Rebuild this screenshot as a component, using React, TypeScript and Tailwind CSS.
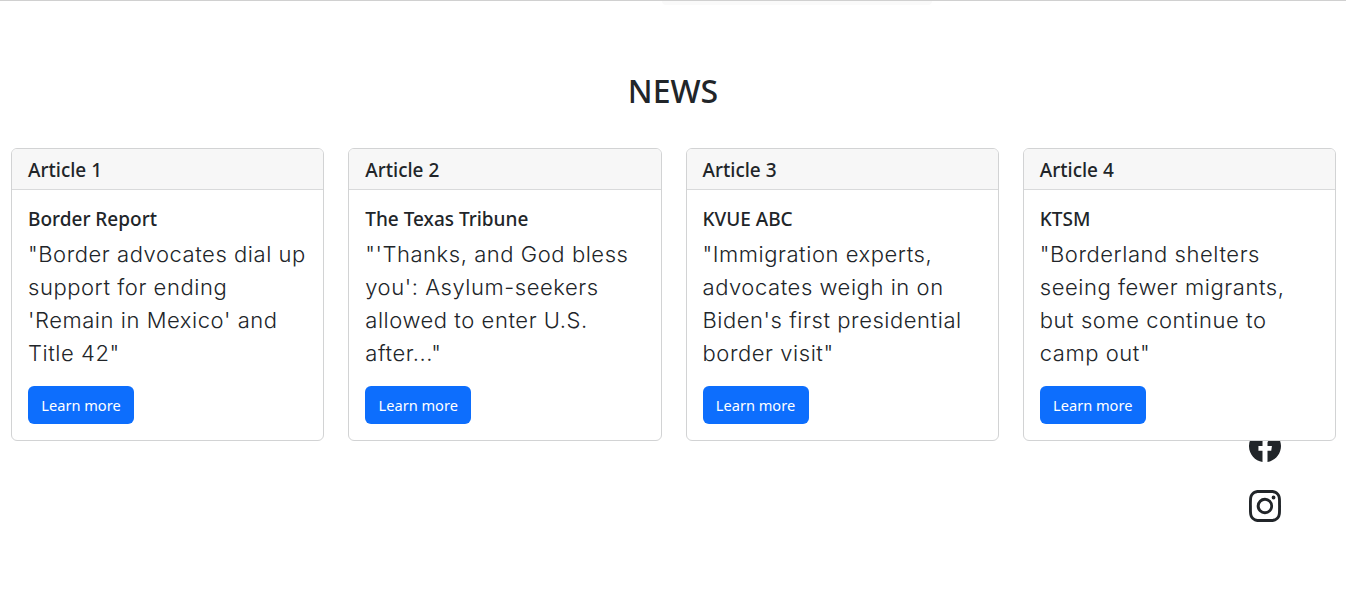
import { BsFacebook, BsInstagram } from "react-icons/bs";

const ARTICLES = [
  { title: "Article 1", source: "Border Report", text: "\"Border advocates dial up support for ending 'Remain in Mexico' and Title 42\"" },
  { title: "Article 2", source: "The Texas Tribune", text: "\"'Thanks, and God bless you': Asylum-seekers allowed to enter U.S. after...\"" },
  { title: "Article 3", source: "KVUE ABC", text: "\"Immigration experts, advocates weigh in on Biden's first presidential border visit\"" },
  { title: "Article 4", source: "KTSM", text: "\"Borderland shelters seeing fewer migrants, but some continue to camp out\"" },
];

export default function App() {
  return (
    <div className="relative h-[600px] overflow-hidden bg-white text-[#212529] font-['Noto_Sans',sans-serif]">
      <div className="h-px bg-[#d0d0d0]" />
      <div className="ml-[662px] h-[4px] w-[270px] bg-[#fafafa] rounded-b-md" />

      <h2 className="mt-[62px] text-center text-[32px] leading-[48px] font-medium">NEWS</h2>

      <div className="absolute left-[1249px] top-[430px] flex flex-col gap-[28px] text-[32px] text-[#212529]">
        <BsFacebook />
        <BsInstagram />
      </div>

      <div className="relative mt-[33px] grid grid-cols-4 gap-x-6 pl-[11px] pr-[10px]">
        {ARTICLES.map(a => (
          <div key={a.title} className="rounded-[6px] border border-[#d2d3d4] bg-white overflow-hidden">
            <div className="h-[41px] border-b border-[#d9dadb] bg-[#f7f7f7] px-4 pt-px text-[19px] leading-[40px] font-medium">
              {a.title}
            </div>
            <div className="p-4">
              <h5 className="text-[19px] leading-[27px] font-medium">{a.source}</h5>
              <p className="mt-[5px] mb-4 font-['Inter',sans-serif] text-[22px] font-light leading-[33px] tracking-[0.55px]">{a.text}</p>
              <button className="h-[38px] w-[106px] rounded-[6px] bg-[#0d6efd] pt-px text-[14.6px] text-white">Learn more</button>
            </div>
          </div>
        ))}
      </div>
    </div>
  );
}
